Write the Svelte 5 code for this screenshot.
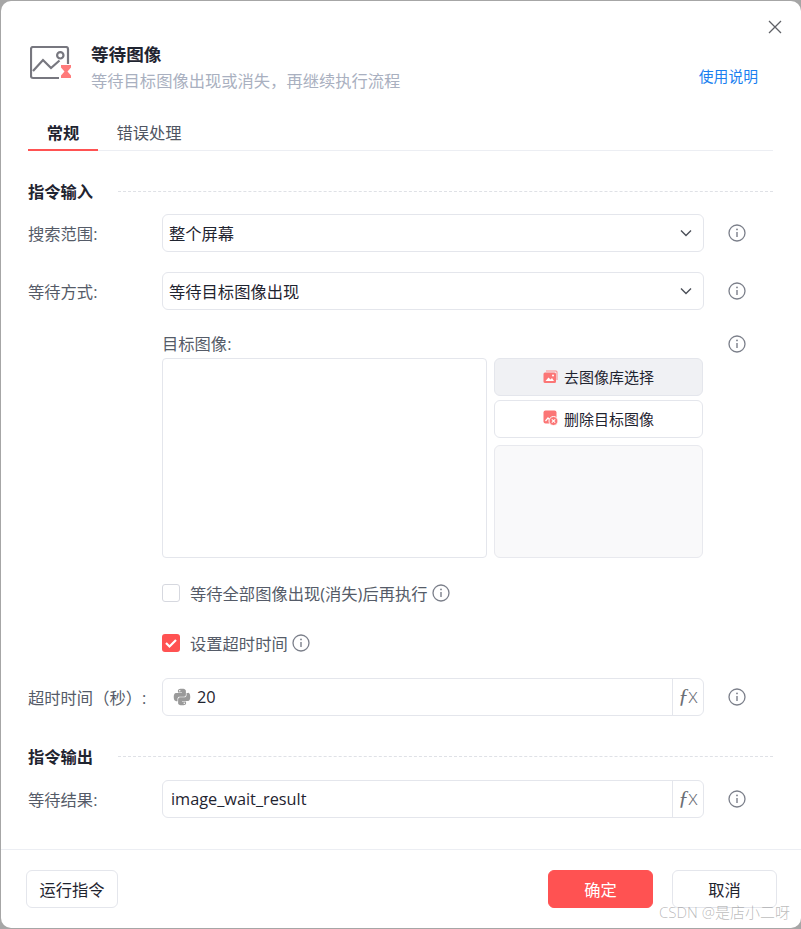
<script>
  let tabs = ['常规', '错误处理'];
  let activeTab = $state('常规');
  let waitAll = $state(false);
  let useTimeout = $state(true);
</script>

{#snippet info()}
  <svg class="info" width="18" height="18" viewBox="0 0 18 18" fill="none" stroke="#7b7f8a" stroke-width="1.3">
    <circle cx="9" cy="9" r="8" />
    <path d="M9 8v5" stroke-width="1.4" />
    <circle cx="9" cy="5.4" r="0.9" fill="#7b7f8a" stroke="none" />
  </svg>
{/snippet}

{#snippet chevron()}
  <svg class="chevron" width="14" height="14" viewBox="0 0 14 14" fill="none" stroke="#4b4f58" stroke-width="1.4">
    <path d="M2 4.5l5 5 5-5" />
  </svg>
{/snippet}

{#snippet fx()}
  <span class="fx"><em>ƒ</em>x</span>
{/snippet}

<div class="dialog">
  <button class="close" type="button" aria-label="关闭">
    <svg width="14" height="14" viewBox="0 0 14 14" stroke="#5f6167" stroke-width="1.3" fill="none">
      <path d="M1 1l12 12M13 1L1 13" />
    </svg>
  </button>

  <header class="head">
    <svg class="logo" width="42" height="36" viewBox="0 0 42 36" fill="none">
      <path d="M29 32H3a2 2 0 0 1-2-2V3a2 2 0 0 1 2-2h33a2 2 0 0 1 2 2v15" stroke="#77777f" stroke-width="2.200" />
      <path d="M3 25l10-11 8 8 8.500-7.500" stroke="#77777f" stroke-width="2.200" />
      <circle cx="30.300" cy="9.300" r="3.200" stroke="#77777f" stroke-width="2.200" />
      <path d="M31 19h10v2.500l-3.500 4 3.500 4V32H31v-2.500l3.500-4-3.500-4z" fill="#ff7b7b" />
    </svg>
    <div class="head-text">
      <h1>等待图像</h1>
      <p>等待目标图像出现或消失，再继续执行流程</p>
    </div>
    <a class="help" href="#help">使用说明</a>
  </header>

  <nav class="tabs">
    {#each tabs as tab}
      <button type="button" class="tab" class:active={activeTab === tab} onclick={() => (activeTab = tab)}>{tab}</button>
    {/each}
  </nav>

  <div class="section first"><span>指令输入</span><i></i></div>

  <div class="row">
    <span class="label">搜索范围:</span>
    <div class="field select"><span>整个屏幕</span>{@render chevron()}</div>
    {@render info()}
  </div>

  <div class="row">
    <span class="label">等待方式:</span>
    <div class="field select"><span>等待目标图像出现</span>{@render chevron()}</div>
    {@render info()}
  </div>

  <div class="target">
    <div class="target-main">
      <div class="target-title">目标图像:</div>
      <div class="target-body">
        <div class="drop"></div>
        <div class="side">
          <button type="button" class="pick">
            <svg width="15" height="15" viewBox="0 0 15 15">
              <path d="M3 1.500h10A1.500 1.500 0 0 1 14.500 3v8h-1V3a.5.500 0 0 0-.5-.5H3z" fill="#fb8a8a" />
              <rect x="0.500" y="3.500" width="12.500" height="10.500" rx="1.500" fill="#fb7676" />
              <path d="M2.500 12l3-3.500 2 2 1.500-1.500 2 3z" fill="#fff" />
              <circle cx="10" cy="6.500" r="1" fill="#fff" />
            </svg>
            去图像库选择
          </button>
          <button type="button" class="del">
            <svg width="15" height="16" viewBox="0 0 15 16">
              <rect x="0.500" y="0.500" width="13" height="13" rx="2" fill="#fb7676" />
              <path d="M2.500 11l2.500-3 2 2" stroke="#fff" stroke-width="1.200" fill="none" />
              <circle cx="10.500" cy="11" r="4.500" fill="#fb7676" stroke="#fff" />
              <path d="M8.800 9.300l3.400 3.400M12.200 9.300l-3.400 3.400" stroke="#fff" stroke-width="1.100" />
            </svg>
            删除目标图像
          </button>
          <div class="preview"></div>
        </div>
      </div>
    </div>
    {@render info()}
  </div>

  <label class="check first-check">
    <input type="checkbox" bind:checked={waitAll} />
    <span class="box"></span>
    <span>等待全部图像出现(消失)后再执行</span>
    {@render info()}
  </label>

  <label class="check second-check">
    <input type="checkbox" bind:checked={useTimeout} />
    <span class="box">
      {#if useTimeout}
        <svg width="18" height="18" viewBox="0 0 18 18" fill="none" stroke="#fff" stroke-width="2.200"><path d="M4 9l3.500 3.500L14 6" /></svg>
      {/if}
    </span>
    <span>设置超时时间</span>
    {@render info()}
  </label>

  <div class="row">
    <span class="label">超时时间（秒）:</span>
    <div class="field with-fx">
      <div class="value">
        <svg class="py" width="18" height="18" viewBox="0 0 24 24" fill="#9a9a9a">
          <path d="M11.900 1C6.300 1 6.600 3.400 6.600 3.400v2.500H12v.8H4.500S1 6.300 1 12c0 5.700 3.100 5.500 3.100 5.500H6v-2.700s-.1-3.100 3-3.100h5.300s2.900 0 2.900-2.800V4s.4-3-5.300-3zM9 2.700a1 1 0 1 1 0 2 1 1 0 0 1 0-2z" />
          <path d="M12.100 23c5.600 0 5.300-2.400 5.300-2.400v-2.500H12v-.8h7.500S23 17.700 23 12c0-5.700-3.100-5.500-3.100-5.500H18v2.700s.1 3.100-3 3.100H9.700s-2.900 0-2.900 2.800V20s-.4 3 5.300 3zm2.900-1.700a1 1 0 1 1 0-2 1 1 0 0 1 0 2z" />
        </svg>
        <span>20</span>
      </div>
      {@render fx()}
    </div>
    {@render info()}
  </div>

  <div class="section second"><span>指令输出</span><i></i></div>

  <div class="row">
    <span class="label">等待结果:</span>
    <div class="field with-fx">
      <div class="value plain"><span>image_wait_result</span></div>
      {@render fx()}
    </div>
    {@render info()}
  </div>

  <footer class="foot">
    <button type="button" class="btn run">运行指令</button>
    <div class="foot-right">
      <button type="button" class="btn ok">确定</button>
      <button type="button" class="btn cancel">取消</button>
    </div>
  </footer>

  <div class="watermark">CSDN @是店小二呀</div>
</div>

<style>
  :global(body) {
    margin: 0;
    background: #a6a6a6;
    overflow: hidden;
  }

  .dialog {
    position: relative;
    box-sizing: border-box;
    width: 800px;
    height: 927px;
    margin: 1px 0 0 1px;
    padding: 0 27px;
    background: #fff;
    border-radius: 10px;
    font-family: "Open Sans", "Noto Sans CJK SC", sans-serif;
    font-size: 16.300px;
    color: #1f2430;
  }

  button {
    font: inherit;
    color: inherit;
    cursor: pointer;
  }

  .close {
    position: absolute;
    top: 19px;
    right: 19px;
    width: 14px;
    height: 14px;
    padding: 0;
    border: 0;
    background: none;
    display: flex;
  }

  .head {
    display: flex;
    align-items: flex-start;
    padding-top: 41px;
    height: 56px;
    margin-left: 2px;
  }

  .logo {
    margin: 4px 19px 0 0;
    flex-shrink: 0;
  }

  .head-text {
    flex: 1;
  }

  h1 {
    margin: 0;
    font-size: 17.600px;
    line-height: 24px;
    font-weight: 700;
  }

  .head-text p {
    margin: 2px 0 0;
    line-height: 26px;
    color: #a9b0c0;
  }

  .help {
    margin: 24px 16px 0 0;
    font-size: 14.800px;
    line-height: 20px;
    color: #1a7ff0;
    text-decoration: none;
  }

  .tabs {
    display: flex;
    margin-top: 24px;
    height: 28px;
    width: 745px;
    border-bottom: 1px solid #eceef3;
  }

  .tab {
    height: 29px;
    padding: 0 0 7px;
    border: 0;
    background: none;
    line-height: 22px;
    color: #4f5562;
    display: block;
    width: 70px;
    margin-right: 16px;
    text-align: center;
    box-sizing: border-box;
    white-space: nowrap;
  }

  .tab.active {
    color: #1f2430;
    font-weight: 700;
    border-bottom: 2px solid #ff5252;
  }

  .section {
    display: flex;
    align-items: center;
    width: 745px;
    line-height: 24px;
    font-weight: 700;
  }

  .section span {
    width: 90px;
    flex-shrink: 0;
  }

  .section i {
    flex: 1;
    margin-top: -1px;
    border-top: 1px dashed #dfe1e6;
  }

  .section.first,
  .section.second {
    margin-top: 29px;
  }

  .row {
    display: flex;
    align-items: center;
    margin-top: 20px;
    height: 38px;
  }

  .section.first + .row {
    margin-top: 10px;
  }

  .section.second + .row {
    margin-top: 11px;
  }

  .label {
    width: 134px;
    color: #555b68;
    flex-shrink: 0;
  }

  .field {
    box-sizing: border-box;
    width: 542px;
    height: 38px;
    border: 1px solid #e4e6ec;
    border-radius: 6px;
    display: flex;
    align-items: center;
  }

  .select {
    padding: 0 10px 0 6px;
    justify-content: space-between;
  }

  .info {
    flex-shrink: 0;
    margin-left: 24px;
  }

  .target {
    display: flex;
    align-items: flex-start;
    margin: 24px 0 0 134px;
  }

  .target .info {
    margin-top: 1px;
  }

  .target-main {
    width: 542px;
  }

  .target-title {
    line-height: 20px;
    color: #555b68;
    height: 20px;
  }

  .target-body {
    display: flex;
    gap: 7px;
    margin-top: 4px;
    height: 200px;
  }

  .drop {
    box-sizing: border-box;
    width: 325px;
    border: 1px solid #e4e6ec;
    border-radius: 4px;
  }

  .side {
    display: flex;
    flex-direction: column;
    width: 209px;
  }

  .side button {
    box-sizing: border-box;
    height: 38px;
    border: 1px solid #e4e6ec;
    border-radius: 6px;
    display: flex;
    align-items: center;
    justify-content: center;
    gap: 6px;
    font-size: 15px;
    padding: 0 0 2px;
  }

  .pick {
    background: #f0f1f4;
    margin-bottom: 4px;
  }

  .del {
    background: #fff;
  }

  .preview {
    flex: 1;
    margin-top: 7px;
    background: #f9f9fa;
    border: 1px solid #e8e9ee;
    border-radius: 6px;
  }

  .check {
    display: flex;
    align-items: center;
    height: 20px;
    margin-left: 134px;
    color: #555b68;
  }

  .check input {
    display: none;
  }

  .check .info {
    margin-left: 4px;
  }

  .first-check {
    margin-top: 25px;
  }

  .second-check {
    margin-top: 30px;
  }

  .second-check + .row {
    margin-top: 25px;
  }

  .box {
    box-sizing: border-box;
    width: 18px;
    height: 18px;
    border: 1px solid #d6d8df;
    border-radius: 3px;
    margin-right: 10px;
    display: flex;
  }

  .second-check .box {
    border: 0;
    background: #ff5252;
  }

  .with-fx {
    justify-content: space-between;
  }

  .value {
    display: flex;
    align-items: center;
    gap: 6px;
    padding-left: 10px;
    flex: 1;
  }

  .value.plain {
    padding-left: 8px;
  }

  .fx {
    box-sizing: border-box;
    width: 31px;
    height: 36px;
    line-height: 34px;
    border-left: 1px solid #e4e6ec;
    text-align: center;
    color: #6b6e76;
    font-size: 20px;
    font-weight: 300;
    font-family: "Open Sans", sans-serif;
    white-space: nowrap;
  }

  .fx em {
    font-family: "Liberation Serif", serif;
    font-size: 22px;
    font-style: italic;
    margin-right: -1px;
  }

  .foot {
    position: absolute;
    left: 0;
    right: 0;
    bottom: 0;
    box-sizing: border-box;
    height: 79px;
    padding: 20px 24px 0 25px;
    border-top: 1px solid #eceef3;
    display: flex;
    justify-content: space-between;
    align-items: flex-start;
  }

  .foot-right {
    display: flex;
    gap: 19px;
  }

  .btn {
    box-sizing: border-box;
    height: 38px;
    border-radius: 6px;
    border: 1px solid #e4e6ec;
    background: #fff;
    font-size: 16.300px;
    padding: 0;
  }

  .run {
    width: 92px;
  }

  .ok {
    width: 105px;
    background: #ff5252;
    border-color: #ff5252;
    color: #fff;
  }

  .cancel {
    width: 105px;
  }

  .watermark {
    position: absolute;
    right: 11px;
    bottom: 6px;
    font-size: 15px;
    font-weight: 300;
    line-height: 20px;
    color: rgba(130, 130, 130, 0.55);
    pointer-events: none;
  }
</style>
